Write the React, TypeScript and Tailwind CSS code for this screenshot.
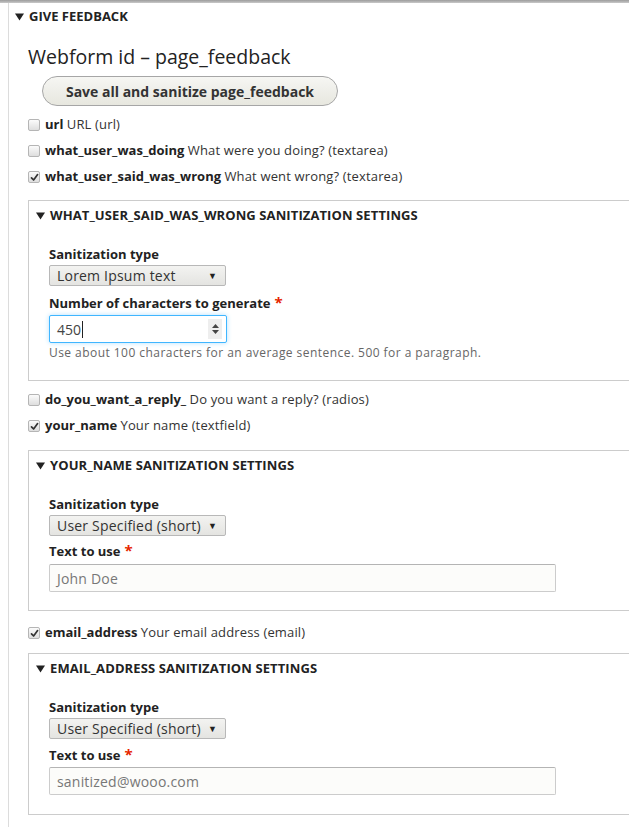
import React from "react";

function Check({ checked }: { checked?: boolean }) {
  return (
    <span className="inline-flex w-[12px] h-[12px] shrink-0 items-center justify-center rounded-[2px] border border-[#b5b5b5] bg-gradient-to-b from-[#fbfbfb] to-[#dedede]">
      {checked ? (
        <svg width="9" height="9" viewBox="0 0 9 9">
          <path d="M1.5 4.8 L3.6 7 L7.6 1.6" fill="none" stroke="#333" strokeWidth="1.7" strokeLinecap="round" strokeLinejoin="round" />
        </svg>
      ) : null}
    </span>
  );
}

function Row({ checked, name, desc }: { checked?: boolean; name: string; desc: string }) {
  return (
    <div className="h-[26px] flex items-center gap-[5px] text-[13px] text-[#333]">
      <Check checked={checked} />
      <span>
        <span className="font-bold text-[#222]">{name}</span>{" "}
        <span className="tracking-[0.15px]">{desc}</span>
      </span>
    </div>
  );
}

function Caret() {
  return (
    <svg width="9" height="8" viewBox="0 0 9 8" className="mr-[5px] shrink-0">
      <path d="M0 0.5 L9 0.5 L4.5 7.5 Z" fill="#222" />
    </svg>
  );
}

function Select({ value, width }: { value: string; width: string }) {
  return (
    <div
      className={`mt-[1px] h-[21px] ${width} flex items-center justify-between pl-[7px] pr-[8px] rounded-[2px] border border-[#b8b8b8] bg-gradient-to-b from-[#f3f3f1] to-[#e4e4e1] text-[14px] tracking-[0.2px] text-[#333]`}
    >
      <span>{value}</span>
      <span className="text-[9px] text-[#222]">▼</span>
    </div>
  );
}

function Label({ text, required }: { text: string; required?: boolean }) {
  return (
    <div className="h-[18px] flex items-center text-[13px] font-bold text-[#222]">
      {text}
      {required ? <span className="ml-[4px] text-[#e62600] text-[15px] leading-none -mt-[4px]">*</span> : null}
    </div>
  );
}

function Legend({ text }: { text: string }) {
  return (
    <div className="h-[30px] flex items-center pl-[7px] text-[13px] font-bold text-[#222] uppercase tracking-[0.1px]">
      <Caret />
      {text}
    </div>
  );
}

function TextInput({ value }: { value: string }) {
  return (
    <div className="h-[28px] w-[507px] flex items-center pl-[7px] rounded-[2px] border border-[#ccc] border-t-[#b4b4b4] bg-[#fcfcfa] text-[14px] tracking-[0.2px] text-[#777]">
      {value}
    </div>
  );
}

export default function App() {
  return (
    <div className="w-[629px] h-[827px] overflow-hidden bg-white relative font-['Open_Sans',sans-serif] text-[#333]">
      <div className="h-[3px] bg-gradient-to-b from-[#9c9c9c] to-[#c9c9c9]" />
      <div className="ml-[8px] border-l border-[#dcdcdc] h-[824px]">
        <div className="h-[28px] flex items-center pl-[6px] text-[13px] font-bold text-[#222] uppercase">
          <Caret />
          Give feedback
        </div>
        <div className="pl-[19px]">
          <h2 className="mt-[12px] h-[28px] flex items-center text-[19.5px] font-medium text-[#222]">Webform id – page_feedback</h2>
          <div className="mt-[5px] ml-[14px] h-[30px] w-[296px] flex items-center justify-center rounded-full border border-[#a6a6a6] bg-gradient-to-b from-[#f6f6f3] to-[#e7e7df] text-[14px] font-bold text-[#333]">
            Save all and sanitize page_feedback
          </div>
          <div className="mt-[6px]">
            <Row name="url" desc="URL (url)" />
            <Row name="what_user_was_doing" desc="What were you doing? (textarea)" />
            <Row checked name="what_user_said_was_wrong" desc="What went wrong? (textarea)" />
          </div>

          <div className="mt-[10px] w-[640px] border border-[#ccc]">
            <Legend text="what_user_said_was_wrong Sanitization settings" />
            <div className="pl-[20px] pt-[15px] pb-[19px]">
              <Label text="Sanitization type" />
              <Select value="Lorem Ipsum text" width="w-[177px]" />
              <div className="mt-[9px]">
                <Label text="Number of characters to generate" required />
              </div>
              <div className="mt-[2px] h-[28px] w-[178px] flex items-center justify-between pl-[7px] pr-[4px] rounded-[2px] border border-[#40b6ff] shadow-[0_0_5px_#b3e0ff] bg-white text-[14px] text-[#444]">
                <span className="flex items-center">
                  450<span className="ml-[1px] w-[1px] h-[17px] bg-[#222]" />
                </span>
                <span className="w-[14px] h-[20px] bg-[#eee] flex flex-col items-center justify-center gap-[2px]">
                  <svg width="7" height="4" viewBox="0 0 7 4"><path d="M0 4 L3.5 0 L7 4 Z" fill="#444" /></svg>
                  <svg width="7" height="4" viewBox="0 0 7 4"><path d="M0 0 L3.5 4 L7 0 Z" fill="#444" /></svg>
                </span>
              </div>
              <div className="mt-[2px] h-[16px] flex items-center text-[12px] tracking-[0.45px] text-[#666]">
                Use about 100 characters for an average sentence. 500 for a paragraph.
              </div>
            </div>
          </div>

          <div className="mt-[6px]">
            <Row name="do_you_want_a_reply_" desc="Do you want a reply? (radios)" />
            <Row checked name="your_name" desc="Your name (textfield)" />
          </div>

          <div className="mt-[11px] w-[640px] border border-[#ccc]">
            <Legend text="your_name Sanitization settings" />
            <div className="pl-[20px] pt-[15px] pb-[18px]">
              <Label text="Sanitization type" />
              <Select value="User Specified (short)" width="w-[177px]" />
              <div className="mt-[7px]">
                <Label text="Text to use" required />
              </div>
              <div className="mt-[3px]">
                <TextInput value="John Doe" />
              </div>
            </div>
          </div>

          <div className="mt-[9px]">
            <Row checked name="email_address" desc="Your email address (email)" />
          </div>

          <div className="mt-[7px] w-[640px] border border-[#ccc]">
            <Legend text="email_address Sanitization settings" />
            <div className="pl-[20px] pt-[15px] pb-[19px]">
              <Label text="Sanitization type" />
              <Select value="User Specified (short)" width="w-[177px]" />
              <div className="mt-[8px]">
                <Label text="Text to use" required />
              </div>
              <div className="mt-[2px]">
                <TextInput value="sanitized@wooo.com" />
              </div>
            </div>
          </div>
        </div>
      </div>
    </div>
  );
}
